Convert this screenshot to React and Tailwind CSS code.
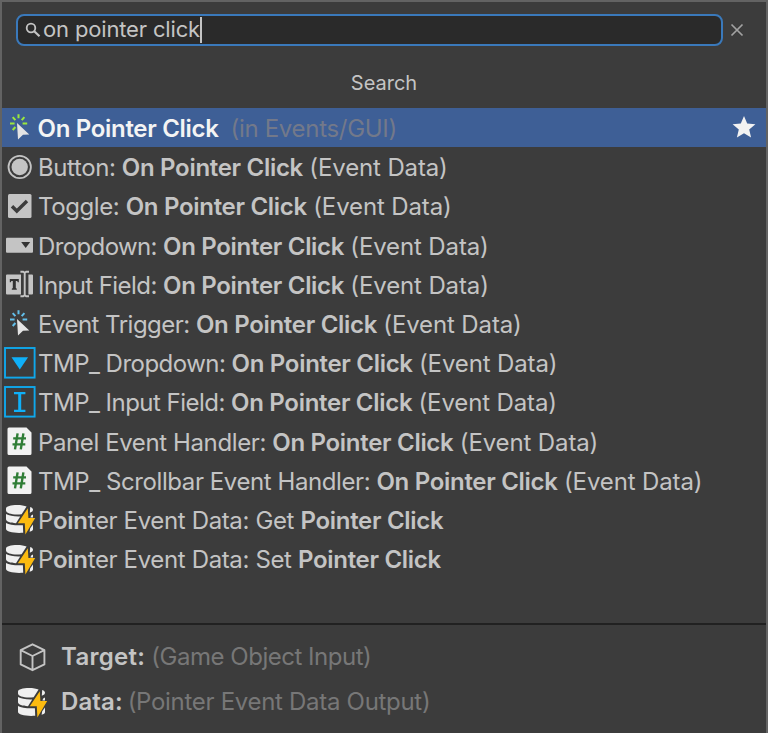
import React from 'react';

const PointerIcon = ({ color }) => (
  <svg viewBox="0 0 32 32" className="w-8 h-8 shrink-0">
    <g stroke={color} strokeWidth="2" fill="none">
      <path d="M14.5 2.2v4M6 11.6h4.6M18.6 11.6h4.6M8.7 5.2l2.7 3M20.4 5.2l-2.7 3M8.7 18l2.7-3" />
    </g>
    <path d="M13 11 25.3 22.4 19 22.8 14 27.4z" fill="#e4e4e4" />
  </svg>
);

const ButtonIcon = () => (
  <svg viewBox="0 0 32 32" className="w-8 h-8 shrink-0">
    <circle cx="15.7" cy="16" r="11.2" fill="none" stroke="#c4c4c4" strokeWidth="1.8" />
    <circle cx="15.7" cy="16" r="8.2" fill="#c4c4c4" />
  </svg>
);

const ToggleIcon = () => (
  <svg viewBox="0 0 32 32" className="w-8 h-8 shrink-0">
    <rect x="4" y="4" width="23.5" height="24" rx="1.5" fill="#c4c4c4" />
    <path d="M8 16.2l4.8 4.8L23 11" fill="none" stroke="#3c3c3c" strokeWidth="3.4" />
  </svg>
);

const DropdownIcon = () => (
  <svg viewBox="0 0 32 32" className="w-8 h-8 shrink-0">
    <rect x="2" y="8.8" width="27" height="15" rx="1" fill="#c4c4c4" />
    <path d="M17.2 13.1h9l-4.5 6z" fill="#333" />
  </svg>
);

const InputIcon = () => (
  <svg viewBox="0 0 32 32" className="w-8 h-8 shrink-0">
    <path d="M3 6.4h14v20H3a1 1 0 0 1-1-1v-18a1 1 0 0 1 1-1zM24.4 6.4H28a1 1 0 0 1 1 1v18a1 1 0 0 1-1 1h-3.6z" fill="#c4c4c4" />
    <path d="M5.8 10.9h9v3.4h-1l-.6-1.2h-1.4v7l1 .6v1H7.8v-1l1-.6v-7H7.400l-.6 1.200h-1z" fill="#333" />
    <path d="M16.4 3.800h2.800l1.500 1 1.500-1H25M16.400 28.200h2.800l1.500-1 1.500 1H25M20.700 4.600v23" fill="none" stroke="#c4c4c4" strokeWidth="1.900" />
  </svg>
);

const TmpDropdownIcon = () => (
  <svg viewBox="0 0 32 32" className="w-8 h-8 shrink-0">
    <rect x="1" y="1" width="29.6" height="29.6" fill="none" stroke="#0fa8ec" strokeWidth="1.9" />
    <path d="M7.500 10.200h16.600L15.800 22.500z" fill="#0fb0f8" />
  </svg>
);

const TmpInputIcon = () => (
  <svg viewBox="0 0 32 32" className="w-8 h-8 shrink-0">
    <rect x="1" y="1" width="29.6" height="29.6" fill="none" stroke="#0fa8ec" strokeWidth="1.9" />
    <path d="M10 7.200h11.400M10 24.800h11.400" fill="none" stroke="#0fb0f8" strokeWidth="2.200" />
    <path d="M15.700 7v18" fill="none" stroke="#0fb0f8" strokeWidth="3" />
  </svg>
);

const ScriptIcon = () => (
  <svg viewBox="0 0 32 32" className="w-8 h-8 shrink-0">
    <path d="M5 2.600h17.500l5 5v21a1.500 1.500 0 0 1-1.500 1.500H5a1.500 1.500 0 0 1-1.500-1.500V4.100A1.500 1.500 0 0 1 5 2.600z" fill="#f2f2f2" />
    <path d="M13.600 8.400l-2.600 16M19.400 8.400l-2.600 16M9.200 13.400h12.800M8.500 19.400h12.800" fill="none" stroke="#2f7d36" strokeWidth="2.400" />
  </svg>
);

const DataIcon = () => (
  <svg viewBox="0 0 32 32" className="w-8 h-8 shrink-0">
    <g fill="#efefef">
      <path d="M2 5.600C2 3.200 7 2 13 2c4 0 7.600.6 9.600 1.600l-5 7.600c-1.600.3-3 .4-4.600.4C7 11.600 2 10 2 7.600z" />
      <path d="M2 11c3 1.900 8.500 2.600 14.200 2.400L12 20.200C6.500 20 2 18.600 2 16.200z" />
      <path d="M2 19.900c3 2 9 2.700 16.900 2.400l.3 7.500C10 30.400 2 28.900 2 25.800z" />
      <path d="M26.200 4c2 .8 2.800 1.500 2.800 2.700s-.8 2.200-3.200 3zM27.200 12.400l1.800-1v3h-2.600zM26.200 25.200l2.800-3.600v4.700c0 1-1.200 1.900-3.400 2.500z" />
    </g>
    <path d="M23.800 5.200 13.800 20.200h7l.6 11.400L31.200 15h-6.800z" fill="#fcbb10" />
  </svg>
);

const CubeIcon = () => (
  <svg viewBox="0 0 32 32" className="w-8 h-8 shrink-0">
    <path d="M16.500 3.300 28.400 9.200v14.200L16.500 29.200 4.700 23.400V9.200zM4.700 9.200l11.800 5.800 11.900-5.800M16.500 15v14" fill="none" stroke="#c4c4c4" strokeWidth="1.900" strokeLinejoin="round" />
  </svg>
);

const click = <b>On Pointer Click</b>;
const eventData = <span className="tracking-[-0.130px]">(Event Data)</span>;

const results = [
  { icon: <ButtonIcon />, tracking: 'tracking-[-0.400px]', label: <>Button: {click} {eventData}</> },
  { icon: <ToggleIcon />, tracking: 'tracking-[-0.400px]', label: <>Toggle: {click} {eventData}</> },
  { icon: <DropdownIcon />, tracking: 'tracking-[-0.620px]', label: <>Dropdown: {click} {eventData}</> },
  { icon: <InputIcon />, tracking: 'tracking-[-0.560px]', label: <>Input Field: {click} {eventData}</> },
  { icon: <PointerIcon color="#63bfea" />, tracking: 'tracking-[-0.520px]', label: <>Event Trigger: {click} {eventData}</> },
  { icon: <TmpDropdownIcon />, tracking: 'tracking-[-0.520px]', label: <>TMP_ Dropdown: {click} {eventData}</> },
  { icon: <TmpInputIcon />, tracking: 'tracking-[-0.520px]', label: <>TMP_ Input Field: {click} {eventData}</> },
  { icon: <ScriptIcon />, tracking: 'tracking-[-0.390px]', label: <>Panel Event Handler: {click} {eventData}</> },
  { icon: <ScriptIcon />, tracking: 'tracking-[-0.420px]', label: <>TMP_ Scrollbar Event Handler: {click} {eventData}</> },
  { icon: <DataIcon />, tracking: 'tracking-[-0.360px]', label: <>P<b>oin</b>ter Event Data: Get <b>Pointer Click</b></> },
  { icon: <DataIcon />, tracking: 'tracking-[-0.360px]', label: <>P<b>oin</b>ter Event Data: Set <b>Pointer Click</b></> },
];

export default function App() {
  return (
    <div className="w-[768px] h-[733px] flex flex-col overflow-hidden bg-[#3c3c3c] border-2 border-b-0 border-[#636363] font-['Inter',sans-serif] text-[24px] text-[#c4c4c4] whitespace-pre [&_b]:font-semibold">
      {/* search box */}
      <div className="flex items-center pt-3 pl-[14px]">
        <div className="w-[707px] h-8 flex items-center rounded-lg border-2 border-[#3a79bb] bg-[#2a2a2a] pl-[7px]">
          <svg viewBox="0 0 16 16" className="w-4 h-4 shrink-0" fill="none" stroke="#c4c4c4">
            <circle cx="6" cy="6" r="4.300" strokeWidth="1.800" />
            <path d="M9.200 9.200l5.300 5" strokeWidth="2.200" />
          </svg>
          <span className="ml-[2px] mb-[2px] text-[22px] leading-[26px] tracking-[-0.160px]">on pointer click</span>
          <span className="w-[2px] h-[26px] mb-px bg-[#c4c4c4]" />
        </div>
        <svg viewBox="0 0 14 14" className="w-[14px] h-[14px] ml-[7px] mb-px" fill="none" stroke="#a2a2a2" strokeWidth="1.700">
          <path d="M1.500 1.500l11 11M12.500 1.500l-11 11" />
        </svg>
      </div>

      <div className="h-[62px] flex items-center justify-center pt-[12px] text-[20px]">Search</div>

      {/* results */}
      <div className="h-[39.200px] shrink-0 flex items-center bg-[#3e5f96] pl-[2px] pr-[10px] text-[#f4f4f4] tracking-[-0.310px]">
        <PointerIcon color="#9be83c" />
        <span className="pl-[1.500px] pt-[2px]"><b>On Pointer Click</b></span>
        <span className="pl-3 pt-[2px] text-[#73798a]">(in Events/GUI)</span>
        <svg viewBox="0 0 24 24" className="w-6 h-6 ml-auto mb-[2px]" fill="#f2f2f2">
          <path d="M12 1l3.200 7.500 8.200.7-6.200 5.400 1.900 8L12 18.300 4.900 22.600l1.900-8L.6 9.200l8.200-.7z" />
        </svg>
      </div>
      {results.map((item, index) => (
        <div key={index} className="h-[39.200px] shrink-0 flex items-center pl-[2px] [&_b]:tracking-[-0.300px]">
          {item.icon}
          <span className={`pl-[2px] pt-[3px] ${item.tracking}`}>{item.label}</span>
        </div>
      ))}

      {/* selected unit ports */}
      <div className="mt-auto h-[110px] shrink-0 border-t-2 border-[#212121] pt-[9px] pl-[14px]">
        <div className="h-[45px] flex items-center">
          <CubeIcon />
          <span className="pl-[13px]"><b className="tracking-[0.300px]">Target:</b><span className="pl-[6px] tracking-[-0.480px] text-[#777]">(Game Object Input)</span></span>
        </div>
        <div className="h-[45px] flex items-center">
          <DataIcon />
          <span className="pl-[13px]"><b className="tracking-[0.100px]">Data:</b><span className="pl-[5px] tracking-[-0.300px] text-[#777]">(Pointer Event Data Output)</span></span>
        </div>
      </div>
    </div>
  );
}
